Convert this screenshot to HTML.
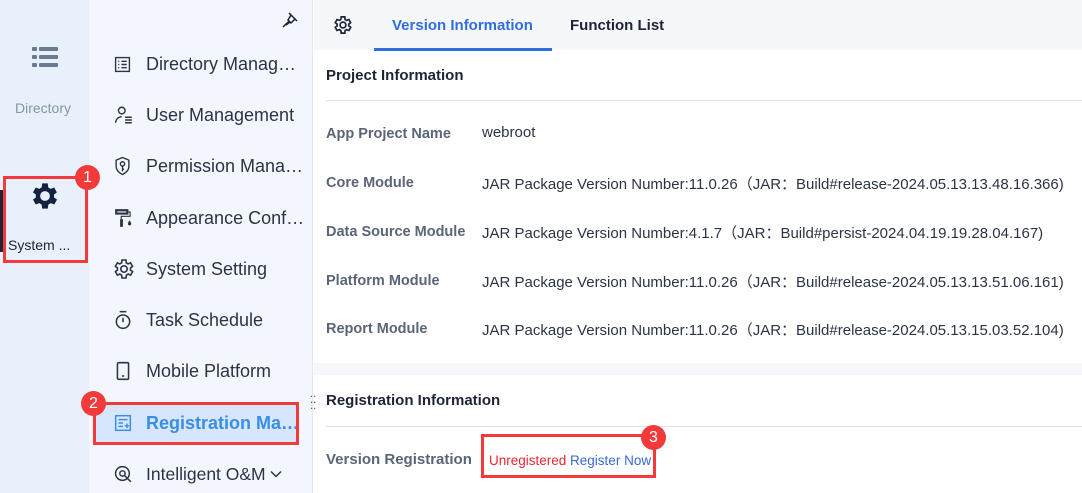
<!DOCTYPE html>
<html><head><meta charset="utf-8"><style>
*{margin:0;padding:0;box-sizing:border-box}
body{width:1082px;height:493px;overflow:hidden;background:#fff;font-family:"Liberation Sans",Arial,sans-serif;position:relative}
.a{position:absolute}
.rail{left:0;top:0;width:89px;height:493px;background:#e8f0fb}
.side{left:89px;top:0;width:224px;height:493px;background:#f3f7fd;border-right:1px solid #e3e8f0}
.mi{position:absolute;left:0;height:30px;display:flex;align-items:center;font-size:18px;color:#2b3445;white-space:nowrap}
.mi svg{position:absolute;left:25px}
.mi span{position:absolute;left:57px}
.tabs{left:314px;top:0;width:768px;height:50px;background:#f5f7fa}
.lab{position:absolute;left:326px;font-size:14.5px;font-weight:bold;color:#5a6577}
.val{position:absolute;left:482px;font-size:15px;color:#2b3445;white-space:nowrap}
.h{position:absolute;left:326px;font-size:15px;font-weight:bold;color:#1c2436}
.box{position:absolute;border:3px solid #f23a3a}
.badge{position:absolute;width:25px;height:25px;border-radius:50%;background:#f23a3a;color:#fff;font-size:16px;text-align:center;line-height:25px}
</style></head><body>
<div class="a rail"></div>
<svg class="a" style="left:32px;top:46px" width="26" height="22" viewBox="0 0 26 22"><g fill="#6b7a91"><rect x="0" y="1" width="5" height="4" rx="1"/><rect x="7" y="1" width="19" height="4" rx="1"/><rect x="0" y="9" width="5" height="4" rx="1"/><rect x="7" y="9" width="19" height="4" rx="1"/><rect x="0" y="17" width="5" height="4" rx="1"/><rect x="7" y="17" width="19" height="4" rx="1"/></g></svg>
<div class="a" style="left:15px;top:100px;font-size:14px;color:#8a93a6">Directory</div>
<div class="a" style="left:0;top:190px;width:3px;height:62px;background:#1c2436"></div>
<svg class="a" style="left:31px;top:182px" width="28" height="28" viewBox="2 2 20 20"><path fill="#13233f" fill-rule="evenodd" d="M19.4 13a7.5 7.5 0 0 0 0-2l2.1-1.6-2-3.5-2.5 1a7.6 7.6 0 0 0-1.7-1L15 3h-4l-.4 2.9a7.6 7.6 0 0 0-1.7 1l-2.5-1-2 3.5L6.5 11a7.5 7.5 0 0 0 0 2l-2.1 1.6 2 3.5 2.5-1a7.6 7.6 0 0 0 1.7 1L11 21h4l.4-2.9a7.6 7.6 0 0 0 1.7-1l2.5 1 2-3.5zM13 15.5a3.5 3.5 0 1 1 0-7 3.5 3.5 0 0 1 0 7z" transform="translate(-1 0)"/></svg>
<div class="a" style="left:8px;top:237px;font-size:14px;color:#1c2436">System ...</div>

<div class="a side">
  <svg class="a" style="left:192px;top:11px" width="18" height="18" viewBox="0 0 18 18" fill="none" stroke="#1c2436" stroke-width="1.5"><path d="M8 2l8 8M10 4l4 4-4 4-1-1-4 3 3-4-1-1z"/><path d="M2 16l4-4"/></svg>
  <div class="mi" style="top:49px"><svg width="17" height="17" viewBox="0 0 16 16" fill="none" stroke="#2b3445" stroke-width="1.3"><rect x="1.5" y="1.5" width="13" height="13"/><path d="M4 5h1M7 5h5M4 8h1M7 8h5M4 11h1M7 11h5"/></svg><span>Directory Manag…</span></div>
  <div class="mi" style="top:100px"><svg width="20" height="20" viewBox="0 0 18 18" fill="none" stroke="#2b3445" stroke-width="1.3"><circle cx="7" cy="5" r="3"/><path d="M1.5 16c0-3 2.5-5.5 5.5-5.5M10 11h6M10 13.5h6M10 16h6"/></svg><span>User Management</span></div>
  <div class="mi" style="top:151px"><svg width="17" height="20" viewBox="0 0 16 18" fill="none" stroke="#2b3445" stroke-width="1.3"><path d="M8 1l6 2.5v6c0 3.5-3 6-6 7.5-3-1.5-6-4-6-7.5v-6z"/><circle cx="8" cy="7" r="2"/><path d="M8 9v5M8 12h1.5"/></svg><span>Permission Mana…</span></div>
  <div class="mi" style="top:203px"><svg width="20" height="20" viewBox="0 0 18 18" fill="#2b3445"><path d="M1 1h12v5H1zM3 3v1h8V3z"/><path d="M13 3h2v5H7v2H6V7h8V4h-1z"/><rect x="5.5" y="10" width="2.5" height="7"/><path d="M14 11c1 1.5 1.5 2.5 1.5 3.2a1.5 1.5 0 0 1-3 0c0-.7.5-1.7 1.5-3.2z"/></svg><span>Appearance Conf…</span></div>
  <div class="mi" style="top:254px"><svg width="20" height="20" viewBox="2 2 20 20" fill="none" stroke="#2b3445" stroke-width="1.6"><path d="M19.4 13a7.5 7.5 0 0 0 0-2l2.1-1.6-2-3.5-2.5 1a7.6 7.6 0 0 0-1.7-1L15 3h-4l-.4 2.9a7.6 7.6 0 0 0-1.7 1l-2.5-1-2 3.5L6.5 11a7.5 7.5 0 0 0 0 2l-2.1 1.6 2 3.5 2.5-1a7.6 7.6 0 0 0 1.7 1L11 21h4l.4-2.9a7.6 7.6 0 0 0 1.7-1l2.5 1 2-3.5z" transform="translate(-1 0)"/><circle cx="12" cy="12" r="3.2"/></svg><span>System Setting</span></div>
  <div class="mi" style="top:305px"><svg width="18" height="20" viewBox="0 0 16 18" fill="none" stroke="#2b3445" stroke-width="1.4"><path d="M5 1.5h6"/><circle cx="8" cy="10.5" r="6"/><path d="M8 7v4"/></svg><span>Task Schedule</span></div>
  <div class="mi" style="top:356px"><svg width="18" height="20" viewBox="0 0 16 18" fill="none" stroke="#2b3445" stroke-width="1.4"><rect x="3" y="1.5" width="10" height="15" rx="1"/><path d="M7 13.5h2"/></svg><span>Mobile Platform</span></div>
  <div class="a" style="left:4px;top:403px;width:206px;height:41px;background:#d7e6fb"></div>
  <div class="mi" style="top:408px;color:#3a8ee6;font-weight:bold"><svg width="18" height="18" viewBox="0 0 16 16" fill="none" stroke="#3a8ee6" stroke-width="1.3"><rect x="1.5" y="1.5" width="13" height="13"/><path d="M4 5h8M4 8h4M4 11h4M9.5 10.5h4M11.5 8.5v4"/></svg><span>Registration Ma…</span></div>
  <div class="mi" style="top:459px"><svg width="19" height="19" viewBox="0 0 18 18" fill="none" stroke="#2b3445" stroke-width="1.4"><circle cx="8" cy="8" r="6.5"/><circle cx="8" cy="8" r="2.5"/><path d="M10 10l6 6"/></svg><span style="font-size:17.5px">Intelligent O&amp;M</span><svg style="left:180px" width="14" height="10" viewBox="0 0 14 10" fill="none" stroke="#2b3445" stroke-width="1.5"><path d="M2 2.5l5 5 5-5"/></svg></div>
</div>
<div class="a" style="left:310px;top:398px;width:8px;height:18px;font-size:10px;color:#555;line-height:6px">⁚⁚<br>⁚⁚</div>

<div class="a tabs"></div>
<svg class="a" style="left:334px;top:16px" width="18" height="18" viewBox="2 2 20 20" fill="none" stroke="#1c2436" stroke-width="1.9"><path d="M19.4 13a7.5 7.5 0 0 0 0-2l2.1-1.6-2-3.5-2.5 1a7.6 7.6 0 0 0-1.7-1L15 3h-4l-.4 2.9a7.6 7.6 0 0 0-1.7 1l-2.5-1-2 3.5L6.5 11a7.5 7.5 0 0 0 0 2l-2.1 1.6 2 3.5 2.5-1a7.6 7.6 0 0 0 1.7 1L11 21h4l.4-2.9a7.6 7.6 0 0 0 1.7-1l2.5 1 2-3.5z" transform="translate(-1 0)"/><circle cx="12" cy="12" r="3.2"/></svg>
<div class="a" style="left:392px;top:17px;font-size:15px;font-weight:bold;color:#2f6ee0">Version Information</div>
<div class="a" style="left:374px;top:48px;width:178px;height:3px;background:#2f6ee0"></div>
<div class="a" style="left:570px;top:17px;font-size:15px;font-weight:bold;color:#1c2436">Function List</div>

<div class="h" style="top:67px">Project Information</div>
<div class="a" style="left:326px;top:100px;width:756px;height:1px;background:#dde1e8"></div>
<div class="lab" style="top:126px">App Project Name</div><div class="val" style="top:124px">webroot</div>
<div class="lab" style="top:175px">Core Module</div><div class="val" style="top:173px">JAR Package Version Number:11.0.26（JAR：Build#release-2024.05.13.13.48.16.366)</div>
<div class="lab" style="top:224px">Data Source Module</div><div class="val" style="top:222px">JAR Package Version Number:4.1.7（JAR：Build#persist-2024.04.19.19.28.04.167)</div>
<div class="lab" style="top:273px">Platform Module</div><div class="val" style="top:271px">JAR Package Version Number:11.0.26（JAR：Build#release-2024.05.13.13.51.06.161)</div>
<div class="lab" style="top:321px">Report Module</div><div class="val" style="top:319px">JAR Package Version Number:11.0.26（JAR：Build#release-2024.05.13.15.03.52.104)</div>
<div class="a" style="left:314px;top:363px;width:768px;height:12px;background:#f5f7fb"></div>
<div class="h" style="top:392px">Registration Information</div>
<div class="a" style="left:326px;top:426px;width:756px;height:1px;background:#dde1e8"></div>
<div class="lab" style="top:451px;font-size:15px">Version Registration</div>
<div class="a" style="left:489px;top:453px;font-size:13.5px;color:#e8262e">Unregistered <span style="color:#3a68d8">Register Now</span></div>

<div class="box" style="left:3px;top:176px;width:85px;height:87px"></div>
<div class="badge" style="left:75px;top:165px">1</div>
<div class="box" style="left:93px;top:402px;width:206px;height:43px"></div>
<div class="badge" style="left:81px;top:391px">2</div>
<div class="box" style="left:481px;top:434px;width:175px;height:44px"></div>
<div class="badge" style="left:641px;top:425px">3</div>
</body></html>
